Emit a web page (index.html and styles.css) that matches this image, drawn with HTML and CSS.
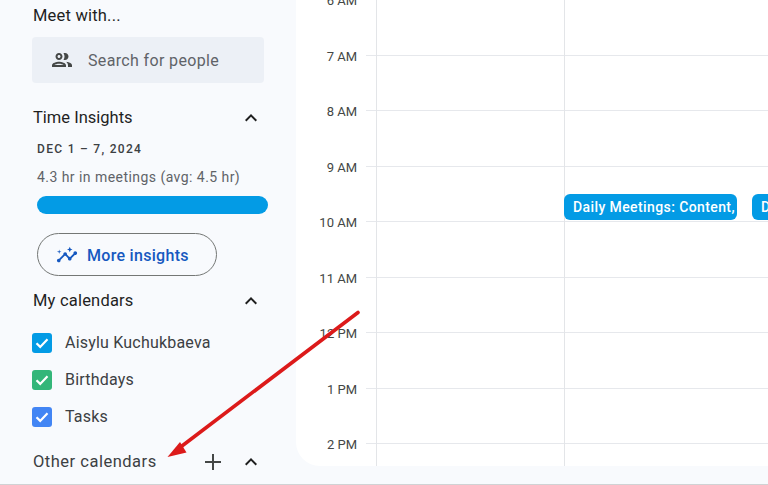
FILE: index.html
```html
<!DOCTYPE html>
<html lang="en">
<head>
  <meta charset="UTF-8" />
  <title>Calendar</title>
  <link rel="stylesheet" href="styles.css">
</head>
<body>
  <div class="app">
    <!-- Left side panel -->
    <aside class="sidebar">
      <h2 class="meet-title">Meet with...</h2>
      <div class="search">
        <svg class="search-icon" viewBox="0 0 24 24"><path d="M9 13.75c-2.34 0-7 1.17-7 3.5V19h14v-1.75c0-2.33-4.66-3.5-7-3.5zM4.34 17c.84-.58 2.87-1.25 4.66-1.25s3.82.67 4.66 1.25H4.34zM9 12c1.93 0 3.5-1.57 3.5-3.5S10.93 5 9 5 5.5 6.57 5.5 8.5 7.07 12 9 12zm0-5c.83 0 1.5.67 1.5 1.5S9.83 10 9 10s-1.5-.67-1.5-1.5S8.17 7 9 7zm7.04 6.81c1.16.84 1.96 1.96 1.96 3.44V19h4v-1.75c0-2.02-3.5-3.17-5.96-3.44zM15 12c1.93 0 3.5-1.57 3.5-3.5S16.93 5 15 5c-.54 0-1.04.13-1.5.35.63.89 1 1.98 1 3.15s-.37 2.26-1 3.15c.46.22.96.35 1.5.35z"/></svg>
        <span>Search for people</span>
      </div>

      <div class="section-head insights-head">
        <h2>Time Insights</h2>
        <svg class="chevron" viewBox="0 0 24 24"><path d="M12 8l-6 6 1.41 1.41L12 10.83l4.59 4.58L18 14z"/></svg>
      </div>
      <div class="insights">
        <div class="range">DEC 1 – 7, 2024</div>
        <div class="hours">4.3 hr in meetings (avg: 4.5 hr)</div>
        <div class="bar"></div>
        <button type="button" class="more">
          <svg viewBox="0 0 24 24"><path d="M21 8c-1.45 0-2.26 1.44-1.93 2.51l-3.55 3.56c-.3-.09-.74-.09-1.04 0l-2.55-2.55C12.27 10.45 11.46 9 10 9c-1.45 0-2.27 1.44-1.93 2.52l-4.56 4.55C2.44 15.74 1 16.55 1 18c0 1.1.9 2 2 2 1.45 0 2.26-1.44 1.93-2.51l4.55-4.56c.3.09.74.09 1.04 0l2.55 2.55C12.73 16.55 13.54 18 15 18c1.45 0 2.27-1.44 1.93-2.52l3.56-3.55c1.07.33 2.51-.48 2.51-1.93 0-1.1-.9-2-2-2z"/><path d="M15 9l.94-2.07L18 6l-2.06-.93L15 3l-.92 2.07L12 6l2.08.93zM3.5 11L4 9l2-.5L4 8l-.5-2L3 8l-2 .5L3 9z"/></svg>
          <span>More insights</span>
        </button>
      </div>

      <div class="section-head my-head">
        <h2>My calendars</h2>
        <svg class="chevron" viewBox="0 0 24 24"><path d="M12 8l-6 6 1.41 1.41L12 10.83l4.59 4.58L18 14z"/></svg>
      </div>
      <ul class="calendars">
        <li>
          <span class="check check-blue"><svg viewBox="0 0 20 20"><path d="M4.5 10.2l3.7 3.7 7.3-7.6"/></svg></span>
          Aisylu Kuchukbaeva
        </li>
        <li>
          <span class="check check-green"><svg viewBox="0 0 20 20"><path d="M4.5 10.2l3.7 3.7 7.3-7.6"/></svg></span>
          Birthdays
        </li>
        <li>
          <span class="check check-tasks"><svg viewBox="0 0 20 20"><path d="M4.5 10.2l3.7 3.7 7.3-7.6"/></svg></span>
          Tasks
        </li>
      </ul>

      <div class="section-head other-head">
        <h2>Other calendars</h2>
        <svg class="plus" viewBox="0 0 24 24"><path d="M20 13h-7v7h-2v-7H4v-2h7V4h2v7h7z"/></svg>
        <svg class="chevron" viewBox="0 0 24 24"><path d="M12 8l-6 6 1.41 1.41L12 10.83l4.59 4.58L18 14z"/></svg>
      </div>
    </aside>

    <!-- Day grid -->
    <main class="grid">
      <div class="columns">
        <div class="day"></div>
        <div class="day"></div>
      </div>
      <div class="rows">
        <div class="row"><span class="label">6 AM</span><span class="line"></span></div>
        <div class="row"><span class="label">7 AM</span><span class="line"></span></div>
        <div class="row"><span class="label">8 AM</span><span class="line"></span></div>
        <div class="row"><span class="label">9 AM</span><span class="line"></span></div>
        <div class="row"><span class="label">10 AM</span><span class="line"></span></div>
        <div class="row"><span class="label">11 AM</span><span class="line"></span></div>
        <div class="row"><span class="label">12 PM</span><span class="line"></span></div>
        <div class="row"><span class="label">1 PM</span><span class="line"></span></div>
        <div class="row"><span class="label">2 PM</span><span class="line"></span></div>
      </div>
      <div class="event event-one">Daily Meetings: Content,</div>
      <div class="event event-two">Daily Meetings: Content,</div>
    </main>
  </div>

  <!-- Red annotation arrow drawn over the screenshot -->
  <svg class="arrow" viewBox="0 0 768 485">
    <path class="arrow-shaft" d="M358 312.5L178 449"/>
    <path class="arrow-head" d="M167.5 457L180 442L186.5 452.5z"/>
  </svg>
</body>
</html>
```

FILE: styles.css
```css
html, body {
  margin: 0;
  height: 100%;
  overflow: hidden;
}
body {
  background: #f8fafd;
  font-family: Roboto, "Liberation Sans", sans-serif;
  color: #1f1f1f;
  position: relative;
}
h2 {
  margin: 0;
  font-size: 16.5px;
  font-weight: 400;
  line-height: 20px;
}
.app {
  display: flex;
  height: 484px;
  border-bottom: 1px solid #d0d2d4;
}

/* sidebar */
.sidebar {
  width: 296px;
  flex: none;
  box-sizing: border-box;
  padding: 6px 0 0 33px;
}
.meet-title {
  letter-spacing: 0.2px;
}
.search {
  width: 232px;
  height: 46px;
  margin: 11px 0 0 -1px;
  display: flex;
  align-items: center;
  background: #ecf0f6;
  border-radius: 4px;
  color: #5f6368;
  font-size: 16px;
  letter-spacing: 0.35px;
}
.search-icon {
  width: 24px;
  height: 24px;
  margin: 0 14px 0 18px;
  fill: #444746;
}
.section-head {
  display: flex;
  align-items: center;
  height: 24px;
  width: 230px;
}
.section-head h2 {
  flex: 1;
}
.insights-head {
  margin-top: 23px;
}
.chevron {
  width: 24px;
  height: 24px;
  fill: #1f1f1f;
}
.plus {
  width: 24px;
  height: 24px;
  fill: #444746;
  margin-right: 14px;
}
.insights {
  padding-left: 4px;
}
.range {
  margin-top: 11px;
  font-size: 12px;
  font-weight: 500;
  letter-spacing: 1.3px;
  line-height: 16px;
  color: #3c4043;
}
.hours {
  margin-top: 12px;
  font-size: 14px;
  letter-spacing: 0.45px;
  line-height: 16px;
  color: #5f6368;
}
.bar {
  width: 231px;
  height: 18px;
  margin-top: 11px;
  background: #039be5;
  border-radius: 9px;
}
.more {
  display: flex;
  align-items: center;
  width: 180px;
  height: 43px;
  margin-top: 19px;
  padding: 0 0 0 18px;
  background: transparent;
  border: 1px solid #747775;
  border-radius: 22px;
  color: #1558c0;
  font-family: inherit;
  font-size: 16px;
  font-weight: 500;
  letter-spacing: 0.3px;
}
.more span {
  padding-top: 2px;
}
.more svg {
  width: 22px;
  height: 22px;
  margin-right: 9px;
  fill: #1558c0;
}
.my-head {
  margin-top: 13px;
}
.my-head h2 {
  letter-spacing: 0.2px;
}
.calendars {
  list-style: none;
  margin: 11px 0 0 -1px;
  padding: 0;
}
.calendars li {
  display: flex;
  align-items: center;
  height: 37px;
  font-size: 16px;
  letter-spacing: 0.2px;
  color: #3c4043;
}
.check {
  width: 20px;
  height: 20px;
  margin-right: 13px;
  border-radius: 3px;
}
.check svg {
  display: block;
  fill: none;
  stroke: #fff;
  stroke-width: 2.2;
}
.check-blue { background: #039be5; }
.check-green { background: #33b679; }
.check-tasks { background: #4285f4; }
.other-head {
  margin-top: 15px;
}
.other-head h2 {
  letter-spacing: 0.5px;
  color: #3c4043;
}

/* main grid */
.grid {
  flex: 1;
  height: 466px;
  position: relative;
  overflow: hidden;
  background: #fff;
  border-radius: 0 0 0 24px;
}
.rows {
  margin-top: -28.25px;
}
.row {
  display: flex;
  align-items: center;
  height: 55.5px;
}
.label {
  width: 61px;
  padding: 2px 9px 0 0;
  text-align: right;
  font-size: 13px;
  color: #444746;
}
.line {
  flex: 1;
  height: 1px;
  background: #e6e8ec;
}
.columns {
  position: absolute;
  top: 0;
  bottom: 0;
  left: 80px;
  display: flex;
}
.day {
  width: 187px;
  border-left: 1px solid #e3e5e8;
}
.day:last-child {
  width: 20px;
}
.event {
  position: absolute;
  top: 194px;
  height: 26px;
  box-sizing: border-box;
  padding-left: 9px;
  overflow: hidden;
  white-space: nowrap;
  background: #039be5;
  border-radius: 6px;
  color: #fff;
  font-size: 14px;
  font-weight: 500;
  letter-spacing: 0.4px;
  line-height: 26px;
}
.event-one {
  left: 268px;
  width: 173px;
}
.event-two {
  left: 456px;
  width: 173px;
}

/* annotation */
.arrow {
  position: absolute;
  top: 0;
  left: 0;
  width: 768px;
  height: 485px;
  pointer-events: none;
}
.arrow-shaft {
  fill: none;
  stroke: #dc1a1a;
  stroke-width: 3.6;
  stroke-linecap: round;
}
.arrow-head {
  fill: #dc1a1a;
}
```
